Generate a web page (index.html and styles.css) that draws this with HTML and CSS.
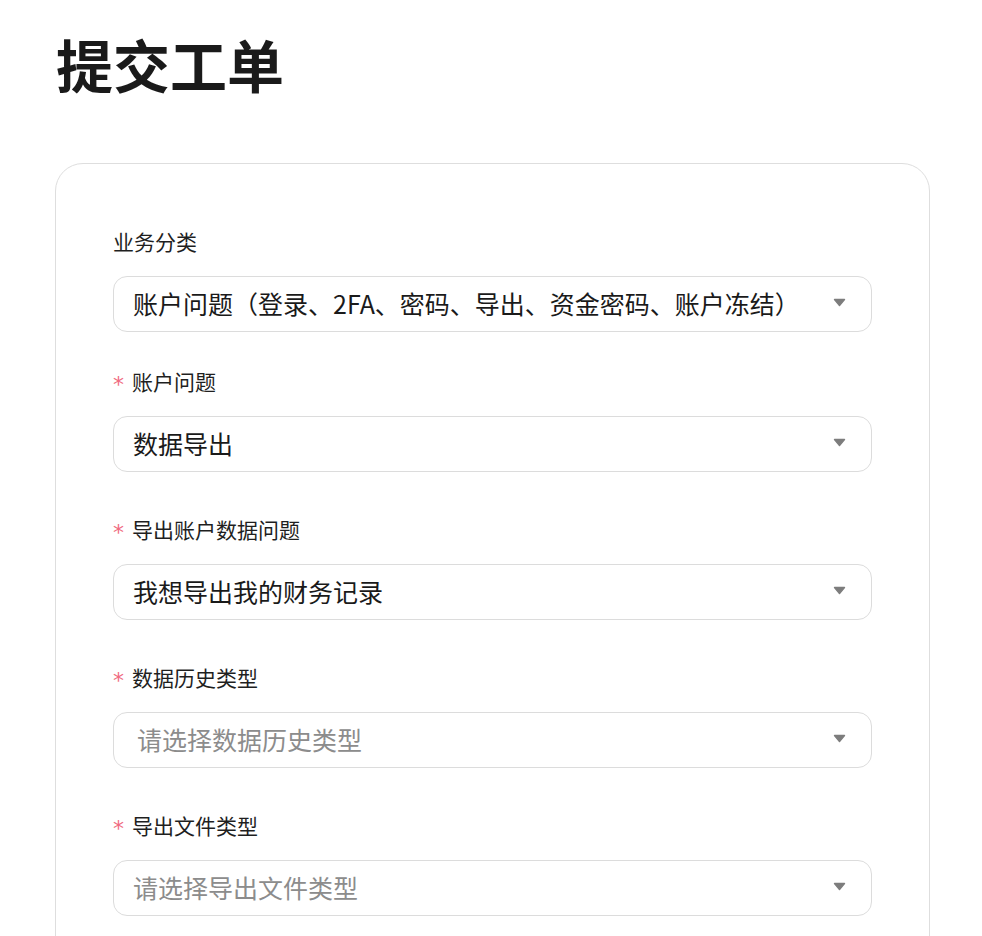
FILE: index.html
```html
<!DOCTYPE html>
<html lang="zh-CN">
  <head>
    <meta charset="UTF-8" />
    <meta name="viewport" content="width=device-width, initial-scale=1.0" />
    <title>提交工单</title>

    <link rel="stylesheet" href="styles.css">
  </head>
  <body>
    <h1 class="page-title">提交工单</h1>

    <form class="ticket-card">
      <div class="field field-first">
        <label class="field-label">业务分类</label>
        <div class="select">
          <span class="select-value">账户问题（登录、2FA、密码、导出、资金密码、账户冻结）</span>
          <svg class="select-arrow" viewBox="0 0 13 9"><path d="M1.5 1.5 H11.5 L6.5 7.5 Z" /></svg>
        </div>
      </div>

      <div class="field">
        <label class="field-label"><span class="required">*</span>账户问题</label>
        <div class="select">
          <span class="select-value">数据导出</span>
          <svg class="select-arrow" viewBox="0 0 13 9"><path d="M1.5 1.5 H11.5 L6.5 7.5 Z" /></svg>
        </div>
      </div>

      <div class="field">
        <label class="field-label"><span class="required">*</span>导出账户数据问题</label>
        <div class="select">
          <span class="select-value">我想导出我的财务记录</span>
          <svg class="select-arrow" viewBox="0 0 13 9"><path d="M1.5 1.5 H11.5 L6.5 7.5 Z" /></svg>
        </div>
      </div>

      <div class="field">
        <label class="field-label"><span class="required">*</span>数据历史类型</label>
        <div class="select">
          <span class="select-placeholder inset">请选择数据历史类型</span>
          <svg class="select-arrow" viewBox="0 0 13 9"><path d="M1.5 1.5 H11.5 L6.5 7.5 Z" /></svg>
        </div>
      </div>

      <div class="field">
        <label class="field-label"><span class="required">*</span>导出文件类型</label>
        <div class="select">
          <span class="select-placeholder">请选择导出文件类型</span>
          <svg class="select-arrow" viewBox="0 0 13 9"><path d="M1.5 1.5 H11.5 L6.5 7.5 Z" /></svg>
        </div>
      </div>
    </form>
  </body>
</html>
```

FILE: styles.css
```css
body {
  margin: 0;
  font-family: "Noto Sans CJK SC", "Noto Sans", sans-serif;
  background-color: #fff;
  color: #1c1c1c;
}
.page-title {
  margin: 0;
  padding: 28px 0 0 56px;
  font-size: 57px;
  line-height: 70px;
  font-weight: 700;
  color: #1a1a1a;
}
.ticket-card {
  box-sizing: border-box;
  width: 875px;
  margin: 65px 0 0 55px;
  padding: 62px 57px 80px;
  border: 1px solid #dedede;
  border-radius: 28px;
}
.field {
  margin-bottom: 42px;
}
.field-first {
  margin-bottom: 34px;
}
.field-label {
  display: block;
  height: 30px;
  font-size: 21px;
  line-height: 30px;
  color: #1f1f1f;
  margin-bottom: 20px;
}
.required {
  color: #f06b80;
  font-family: "DejaVu Sans", sans-serif;
  font-size: 22px;
  line-height: 0;
  vertical-align: -2px;
  margin-right: 8px;
}
.select {
  box-sizing: border-box;
  display: flex;
  align-items: center;
  justify-content: space-between;
  height: 56px;
  padding: 0 25px 3px 19px;
  border: 1px solid #dcdcdc;
  border-radius: 14px;
  font-size: 25px;
}
.select-value {
  color: #1a1a1a;
}
.select-placeholder {
  color: #8c8c8c;
}
.select-placeholder.inset {
  padding-left: 4px;
}
.select-arrow {
  width: 13px;
  height: 9px;
  flex-shrink: 0;
  fill: #7d7d7d;
  stroke: #7d7d7d;
  stroke-width: 1.4;
  stroke-linejoin: round;
}
```
